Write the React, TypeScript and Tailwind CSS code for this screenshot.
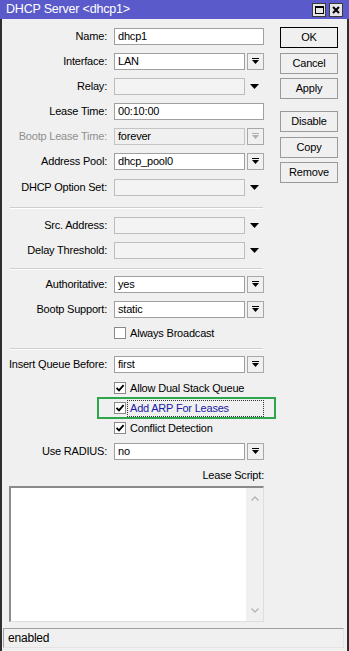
import React from "react";

const DropBtn = ({ disabled = false }: { disabled?: boolean }) => (
  <div className="ml-[2px] flex h-[17px] w-[17px] items-center justify-center border border-[#a8a8a8] bg-[#f0f0f0]">
    <svg width="7" height="7" viewBox="0 0 7 7">
      <rect x="0" y="0" width="7" height="1" fill={disabled ? "#b0b0b0" : "#000"} />
      <polygon points="0,2 7,2 3.5,6" fill={disabled ? "#b0b0b0" : "#000"} />
    </svg>
  </div>
);

const PlainArrow = () => (
  <div className="flex h-[17px] w-[19px] items-center justify-center">
    <svg width="9" height="5" viewBox="0 0 9 5">
      <polygon points="0,0 9,0 4.5,5" fill="#000" />
    </svg>
  </div>
);

const Label = ({ text, disabled = false }: { text: string; disabled?: boolean }) => (
  <div
    className={`w-[105px] shrink-0 text-right leading-[17px] ${disabled ? "text-[#8f8f8f]" : "text-black"}`}
  >
    {text}
  </div>
);

const TextRow = ({ label, value, mt }: { label: string; value: string; mt: string }) => (
  <div className={`flex h-[17px] items-center ${mt}`}>
    <Label text={label} />
    <div className="ml-[7px] flex h-[17px] w-[150px] items-center border border-[#a0a0a0] bg-white pl-[3px]">
      {value}
    </div>
  </div>
);

const ComboRow = ({
  label,
  value,
  mt,
  disabled = false,
}: {
  label: string;
  value: string;
  mt: string;
  disabled?: boolean;
}) => (
  <div className={`flex h-[17px] items-center ${mt}`}>
    <Label text={label} disabled={disabled} />
    <div
      className={`ml-[7px] flex h-[17px] w-[131px] items-center border pl-[3px] ${
        disabled ? "border-[#c4c4c4] bg-[#f0f0f0]" : "border-[#a0a0a0] bg-white"
      }`}
    >
      {value}
    </div>
    <DropBtn disabled={disabled} />
  </div>
);

const EmptyRow = ({ label, mt }: { label: string; mt: string }) => (
  <div className={`flex h-[17px] items-center ${mt}`}>
    <Label text={label} />
    <div className="ml-[7px] h-[17px] w-[131px] border border-[#bdbdbd] bg-[#f3f3f3]" />
    <PlainArrow />
  </div>
);

const Check = ({ checked }: { checked: boolean }) => (
  <div className="flex h-[12px] w-[12px] shrink-0 items-center justify-center border border-[#8a8a8a] bg-white">
    {checked && (
      <svg width="10" height="10" viewBox="0 0 10 10">
        <path d="M1.5 4.8 L4 7.3 L8.6 2.2" stroke="#000" strokeWidth="1.9" fill="none" />
      </svg>
    )}
  </div>
);

const CheckRow = ({ label, checked, mt }: { label: string; checked: boolean; mt: string }) => (
  <div className={`ml-[112px] flex h-[12px] items-center ${mt}`}>
    <Check checked={checked} />
    <span className="ml-[4px] whitespace-nowrap">{label}</span>
  </div>
);

const Sep = ({ mt }: { mt: string }) => (
  <div className={`ml-[8px] w-[253px] border-t border-b border-t-[#cfcfcf] border-b-white ${mt}`} />
);

const Btn = ({ text, mt, def = false }: { text: string; mt: string; def?: boolean }) => (
  <div
    className={`flex h-[21px] w-[58px] items-center justify-center bg-[#f0f0f0] ${mt} ${
      def ? "border border-black" : "border border-[#9a9a9a]"
    }`}
  >
    <span>{text}</span>
  </div>
);

export default function App() {
  return (
    <div className="relative h-[651px] w-[349px] overflow-hidden bg-[#f0f0f0] font-['Liberation_Sans',Arial,sans-serif] text-[11px] tracking-[-0.2px] text-black">
      {/* Title bar */}
      <div className="flex h-[19px] items-center bg-[#5a5acb] pl-[6px] pr-[6px]">
        <span className="text-[12.5px] tracking-[-0.2px] text-white">DHCP Server &lt;dhcp1&gt;</span>
        <div className="ml-auto flex gap-[3px]">
          <div className="flex h-[14px] w-[14px] items-center justify-center border border-[#3a3a3a] bg-[#e6e6e6]">
            <div className="h-[8px] w-[9px] border border-t-2 border-black" />
          </div>
          <div className="flex h-[14px] w-[14px] items-center justify-center border border-[#3a3a3a] bg-[#e6e6e6]">
            <svg width="8" height="8" viewBox="0 0 8 8">
              <path d="M1 1 L7 7 M7 1 L1 7" stroke="#000" strokeWidth="2" />
            </svg>
          </div>
        </div>
      </div>

      {/* Body */}
      <div className="flex h-[632px] flex-col border-l-2 border-r-2 border-[#2e2e2e]">
        <div className="flex">
          {/* Form column */}
          <div className="flex w-[262px] flex-col pt-[9px]">
            <TextRow label="Name:" value="dhcp1" mt="mt-0" />
            <ComboRow label="Interface:" value="LAN" mt="mt-[8px]" />
            <EmptyRow label="Relay:" mt="mt-[8px]" />
            <TextRow label="Lease Time:" value="00:10:00" mt="mt-[8px]" />
            <ComboRow label="Bootp Lease Time:" value="forever" mt="mt-[8px]" disabled />
            <ComboRow label="Address Pool:" value="dhcp_pool0" mt="mt-[8px]" />
            <EmptyRow label="DHCP Option Set:" mt="mt-[9px]" />
            <Sep mt="mt-[11px]" />
            <EmptyRow label="Src. Address:" mt="mt-[8px]" />
            <EmptyRow label="Delay Threshold:" mt="mt-[8px]" />
            <Sep mt="mt-[9px]" />
            <ComboRow label="Authoritative:" value="yes" mt="mt-[6px]" />
            <ComboRow label="Bootp Support:" value="static" mt="mt-[8px]" />
            <CheckRow label="Always Broadcast" checked={false} mt="mt-[9px]" />
            <Sep mt="mt-[9px]" />
            <ComboRow label="Insert Queue Before:" value="first" mt="mt-[6px]" />
            <CheckRow label="Allow Dual Stack Queue" checked mt="mt-[9px]" />
            <div className="ml-[112px] mt-[8px] flex h-[12px] items-center">
              <Check checked />
              <span className="ml-[1px] flex h-[17px] w-[139px] items-center border border-dotted border-[#333] pl-[2px] text-[#1a1aa6]">
                Add ARP For Leases
              </span>
            </div>
            <CheckRow label="Conflict Detection" checked mt="mt-[8px]" />
            <ComboRow label="Use RADIUS:" value="no" mt="mt-[9px]" />
            <div className="mt-[9px] h-[13px] text-right leading-[13px]">Lease Script:</div>
            <div className="ml-[7px] mt-[4px] flex h-[136px] w-[255px] border-t-2 border-l-2 border-r border-b border-t-[#8a8a8a] border-l-[#8a8a8a] border-r-[#dedede] border-b-[#dedede] bg-white">
              <div className="flex-1" />
              <div className="flex w-[17px] flex-col items-center justify-between bg-[#f0f0f0] py-[8px]">
                <svg width="8" height="5" viewBox="0 0 8 5">
                  <path d="M0.5 4.5 L4 1 L7.5 4.5" stroke="#b5b5b5" strokeWidth="1.4" fill="none" />
                </svg>
                <svg width="8" height="5" viewBox="0 0 8 5">
                  <path d="M0.5 0.5 L4 4 L7.5 0.5" stroke="#b5b5b5" strokeWidth="1.4" fill="none" />
                </svg>
              </div>
            </div>
          </div>

          {/* Buttons column */}
          <div className="ml-[16px] flex flex-col pt-[8px]">
            <Btn text="OK" mt="mt-0" def />
            <Btn text="Cancel" mt="mt-[5px]" />
            <Btn text="Apply" mt="mt-[4px]" />
            <Btn text="Disable" mt="mt-[12px]" />
            <Btn text="Copy" mt="mt-[5px]" />
            <Btn text="Remove" mt="mt-[4px]" />
          </div>
        </div>

        {/* Status bar */}
        <div className="ml-[1px] mt-[6px] flex h-[20px] w-[341px] items-center border-t border-l border-r border-b border-t-[#a0a0a0] border-l-[#a0a0a0] border-r-[#e4e4e4] border-b-[#e4e4e4] pl-[4px] text-[12px]">
          enabled
        </div>
      </div>

      {/* Highlight overlay */}
      <div className="pointer-events-none absolute left-[97px] top-[397px] h-[22px] w-[179px] border-2 border-[#2ea64c]" />
    </div>
  );
}
